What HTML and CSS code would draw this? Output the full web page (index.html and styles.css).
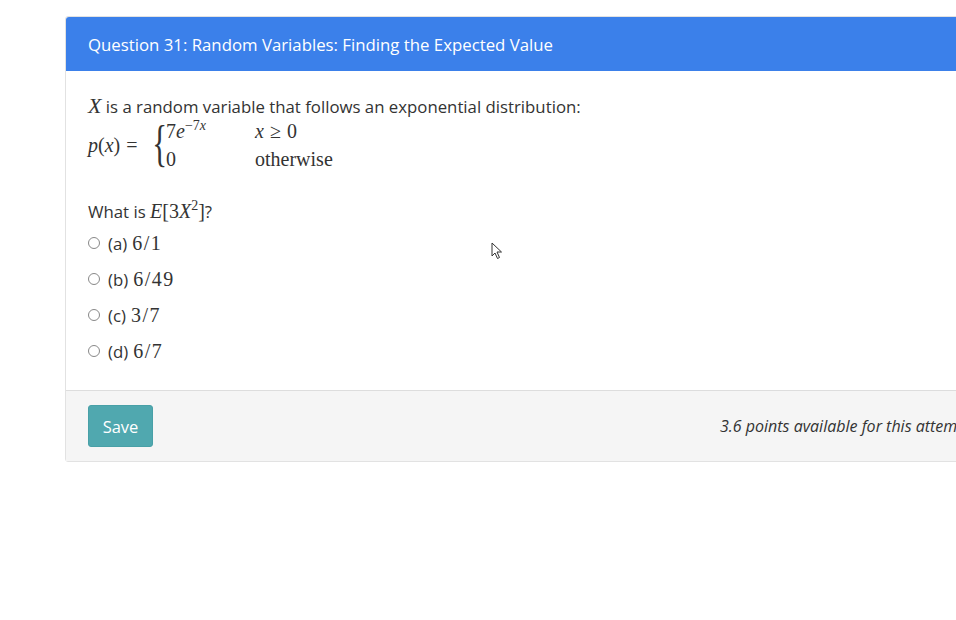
FILE: index.html
```html
<!DOCTYPE html>
<html>
<head>
<meta charset="utf-8">
<link rel="stylesheet" href="styles.css">
</head>
<body>
<div class="page">
  <div class="card">
    <div class="card-header">Question 31: Random Variables: Finding the Expected Value</div>
    <div class="card-body">
      <p class="intro"><span class="mi big">X</span> is a random variable that follows an exponential distribution:</p>
      <div class="eq">
        <span class="lhs"><span class="mi">p</span>(<span class="mi">x</span>)<span class="rel">=</span></span>
        <span class="brace">{</span>
        <div class="cases">
          <span class="c1">7<span class="mi">e</span><sup>−7<span class="mi">x</span></sup></span>
          <span class="c2"><span class="mi">x</span><span class="rel">≥</span>0</span>
          <span class="c1">0</span>
          <span class="c2">otherwise</span>
        </div>
      </div>
      <p class="question">What is <span class="math"><span class="mi">E</span>[3<span class="mi">X</span><sup>2</sup>]</span>?</p>
      <ul class="options">
        <li><span class="radio"></span>(a) <span class="math frac">6/1</span></li>
        <li><span class="radio"></span>(b) <span class="math frac">6/49</span></li>
        <li><span class="radio"></span>(c) <span class="math frac">3/7</span></li>
        <li><span class="radio"></span>(d) <span class="math frac">6/7</span></li>
      </ul>
    </div>
    <div class="card-footer">
      <button class="btn-save">Save</button>
      <span class="points">3.6 points available for this attempt</span>
    </div>
  </div>
  <svg class="cursor" width="12" height="18" viewBox="0 0 12 18"><path d="M1 1 L1 14 L4 11 L6.5 16.5 L8.5 15.5 L6 10 L10.5 10 Z" fill="#fff" stroke="#333" stroke-width="1"/></svg>
</div>
</body>
</html>
```
FILE: styles.css
```css
html, body { margin: 0; padding: 0; overflow: hidden; background: #fff; }
body { font-family: "Open Sans", "Noto Sans", sans-serif; color: #333; font-size: 16.8px; }
.page { position: relative; width: 956px; height: 620px; padding: 16px 0 0 65px; box-sizing: border-box; overflow: hidden; }
.card { width: 1000px; border: 1px solid #e2e2e2; border-radius: 3px; background: #fff; }
.card-header { background: #3b80ea; color: #fff; height: 54px; display: flex; align-items: center; padding: 0 22px; font-size: 16.8px; border-radius: 3px 3px 0 0; }
.card-body { padding: 23px 22px 21px; }
.intro { margin: 0; line-height: 24px; }
.mi { font-family: "Liberation Serif", serif; font-style: italic; }
.big { font-size: 22px; }
.math { font-family: "Liberation Serif", serif; font-size: 20px; }
sup { font-size: 14px; line-height: 0; }
.rel { margin: 0 6px; }
.eq { display: flex; align-items: center; font-family: "Liberation Serif", serif; font-size: 20px; height: 52px; margin-top: 0; }
.lhs { width: 62px; white-space: nowrap; }
.rel-wide { margin: 0 8px; }
.brace { font-size: 50px; line-height: 1; transform: scaleX(0.62); font-weight: 300; margin: -5px 0 0 -1px; width: 17px; color: #333; }
.cases { display: grid; grid-template-columns: 89px auto; row-gap: 4px; line-height: 24px; }
.question { margin: 27px 0 0; line-height: 26px; }
.options { list-style: none; margin: 0; padding: 0; }
.options li { display: flex; align-items: center; height: 36px; }
.radio { width: 12px; height: 12px; border: 1px solid #888; border-radius: 50%; margin: 0 8px 0 0; box-sizing: border-box; }
.options .math { margin-left: 5px; }
.frac { letter-spacing: 1.5px; }
.card-footer { background: #f5f5f5; border-top: 1px solid #ddd; height: 70px; display: flex; align-items: center; padding: 0 22px; }
.btn-save { background: #50a8af; color: #fff; border: 1px solid #48a0a7; border-radius: 3px; width: 65px; height: 42px; font-family: inherit; font-size: 16.5px; padding: 0; }
.points { font-style: italic; font-size: 16px; color: #333; margin-left: 567px; white-space: nowrap; }
.cursor { position: absolute; left: 491px; top: 242px; }
```
